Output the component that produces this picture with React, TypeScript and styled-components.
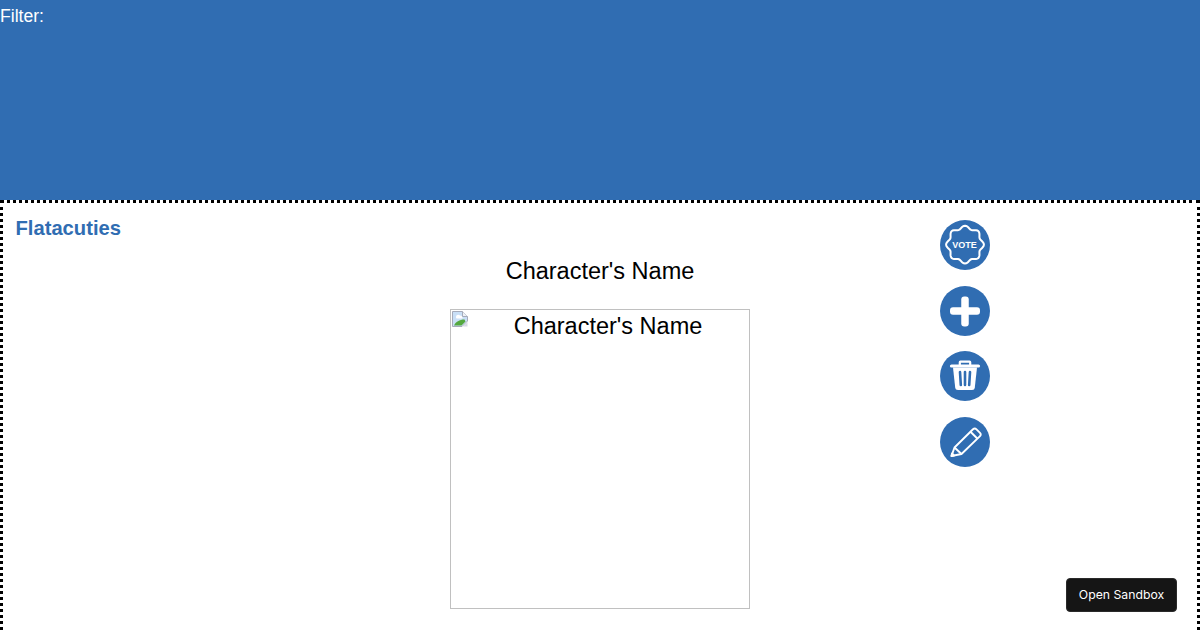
import styled, { createGlobalStyle } from 'styled-components';

const BLUE = '#306db2';

// wavy seal outline for the vote badge, 8 lobes with one pointing up
const SEAL_PATH =
  Array.from({ length: 96 }, (_, i) => {
    const angle = (i / 96) * Math.PI * 2;
    const radius = 17.4 + 1.5 * Math.cos(angle * 8);
    const x = 25 + radius * Math.sin(angle);
    const y = 24.6 - radius * Math.cos(angle);
    return `${i === 0 ? 'M' : 'L'}${x.toFixed(2)} ${y.toFixed(2)}`;
  }).join('') + 'Z';

const GlobalStyle = createGlobalStyle`
  html, body {
    margin: 0;
    height: 630px;
    overflow: hidden;
    background: #fff;
    font-family: Helvetica, Arial, sans-serif;
  }
`;

export default function App() {
  return (
    <>
      <GlobalStyle />
      <Header>
        <FilterLabel>Filter:</FilterLabel>
      </Header>
      <Main>
        <Logo>Flatacuties</Logo>
        <Details>
          <Name>Character's Name</Name>
          <BrokenImage>
            <BrokenIcon width="16" height="16" viewBox="0 0 16 16">
              <path d="M.5 .5H10.500L15.500 5.500V10L10 15.500H.5Z" fill="#c9dff6" stroke="#a6abba" />
              <path d="M4 6C4 4 6.500 3 8 4.500C10 4.500 11 6 10.500 7.500H5C4.500 7.500 4 7 4 6Z" fill="#fff" />
              <path d="M10.500 .5V5.500H15.500" fill="#eef1f6" stroke="#a6abba" />
              <path d="M2 14.500C3.500 11 7.500 8.500 12.500 8.500L13.500 10.500 9.500 14.500Z" fill="#54a83f" />
              <path d="M11 15.500L15.500 11V15.500Z" fill="#d7dbe3" />
            </BrokenIcon>
            <AltText>Character's Name</AltText>
          </BrokenImage>
        </Details>
        <Actions>
          <ActionButton>
            <svg width="50" height="50" viewBox="0 0 50 50">
              <path d={SEAL_PATH} fill="none" stroke="#fff" strokeWidth="2" />
              <VoteText x="24.500" y="28">VOTE</VoteText>
            </svg>
          </ActionButton>
          <ActionButton>
            <svg width="50" height="50" viewBox="0 0 50 50" fill="#fff">
              <rect x="10" y="21.250" width="30" height="7.500" rx="3" />
              <rect x="21.250" y="10.500" width="7.500" height="30" rx="3" />
            </svg>
          </ActionButton>
          <ActionButton>
            <svg width="50" height="50" viewBox="0 0 50 50" fill="none" stroke="#fff">
              <path d="M11.500 15H38.500" strokeWidth="3.200" strokeLinecap="round" />
              <path d="M19.800 14V11.200C19.800 10.800 20 10.600 20.400 10.600H29.600C30 10.600 30.200 10.800 30.200 11.200V14" strokeWidth="2.200" />
              <path d="M13 16.500L15.200 36.500C15.400 38.200 16.300 39 18 39H32C33.700 39 34.600 38.200 34.800 36.500L37 16.500Z" fill="#fff" stroke="none" />
              <path d="M20 21L20.800 34M25 21V34M30 21L29.200 34" stroke={BLUE} strokeWidth="2.600" strokeLinecap="round" />
            </svg>
          </ActionButton>
          <ActionButton>
            <svg width="50" height="50" viewBox="0 0 50 50" fill="none" stroke="#fff" strokeWidth="1.900" strokeLinejoin="round">
              <path d="M14.500 30.500L33 12.300C34 11.300 35.500 11.300 36.500 12.300L40 15.800C41 16.800 41 18.200 40 19.200L21.500 37L11.500 39Z" />
              <path d="M14.500 30.500L21.500 37M30.500 14.800L37.500 21.700" />
              <path d="M11.500 39L12 36.500L14 38.500Z" fill="#fff" />
            </svg>
          </ActionButton>
        </Actions>
      </Main>
      <SandboxButton>Open Sandbox</SandboxButton>
    </>
  );
}

const Header = styled.header`
  height: 200px;
  background-color: ${BLUE};
  color: #fff;
`;

const FilterLabel = styled.div`
  font-size: 17.600px;
  line-height: 32px;
`;

const Main = styled.main`
  display: grid;
  grid-template-columns: 1fr 300px 1fr;
  height: 430px;
  box-sizing: border-box;
  border: 3px dotted #000;
  border-bottom: none;
`;

const Logo = styled.h1`
  margin: 13px 0 0 12.500px;
  color: ${BLUE};
  font-size: 20.200px;
  line-height: 24px;
  font-weight: 700;
`;

const Details = styled.section`
  display: flex;
  flex-direction: column;
  align-items: center;
  padding-top: 54px;
`;

const Name = styled.h2`
  margin: 0 0 24px;
  font-size: 23.500px;
  line-height: 28px;
  font-weight: 400;
  color: #000;
  white-space: nowrap;
`;

const BrokenImage = styled.div`
  display: flex;
  align-items: flex-start;
  width: 300px;
  height: 300px;
  box-sizing: border-box;
  border: 1px solid #c0c0c0;
  color: #000;
  font-size: 23.500px;
  line-height: 28px;
`;

const BrokenIcon = styled.svg`
  flex: none;
  margin: 1px -1px 0 1px;
`;

const AltText = styled.span`
  flex: 1;
  padding-top: 2px;
  text-align: center;
`;

const Actions = styled.aside`
  display: flex;
  flex-direction: column;
  gap: 15.500px;
  padding: 17px 0 0 190px;
`;

const ActionButton = styled.div`
  width: 50px;
  height: 50px;
  border-radius: 50%;
  background-color: ${BLUE};

  svg {
    display: block;
  }
`;

const VoteText = styled.text`
  fill: #fff;
  font-family: Helvetica, Arial, sans-serif;
  font-size: 9px;
  font-weight: 700;
  text-anchor: middle;
`;

const SandboxButton = styled.button`
  position: fixed;
  right: 23px;
  bottom: 18px;
  width: 111px;
  height: 34px;
  padding: 0 0 2px;
  border: 1px solid #2a2a2a;
  border-radius: 4px;
  background: #151515;
  color: #fff;
  font-family: Inter, sans-serif;
  font-size: 12.250px;
  font-weight: 400;
`;
